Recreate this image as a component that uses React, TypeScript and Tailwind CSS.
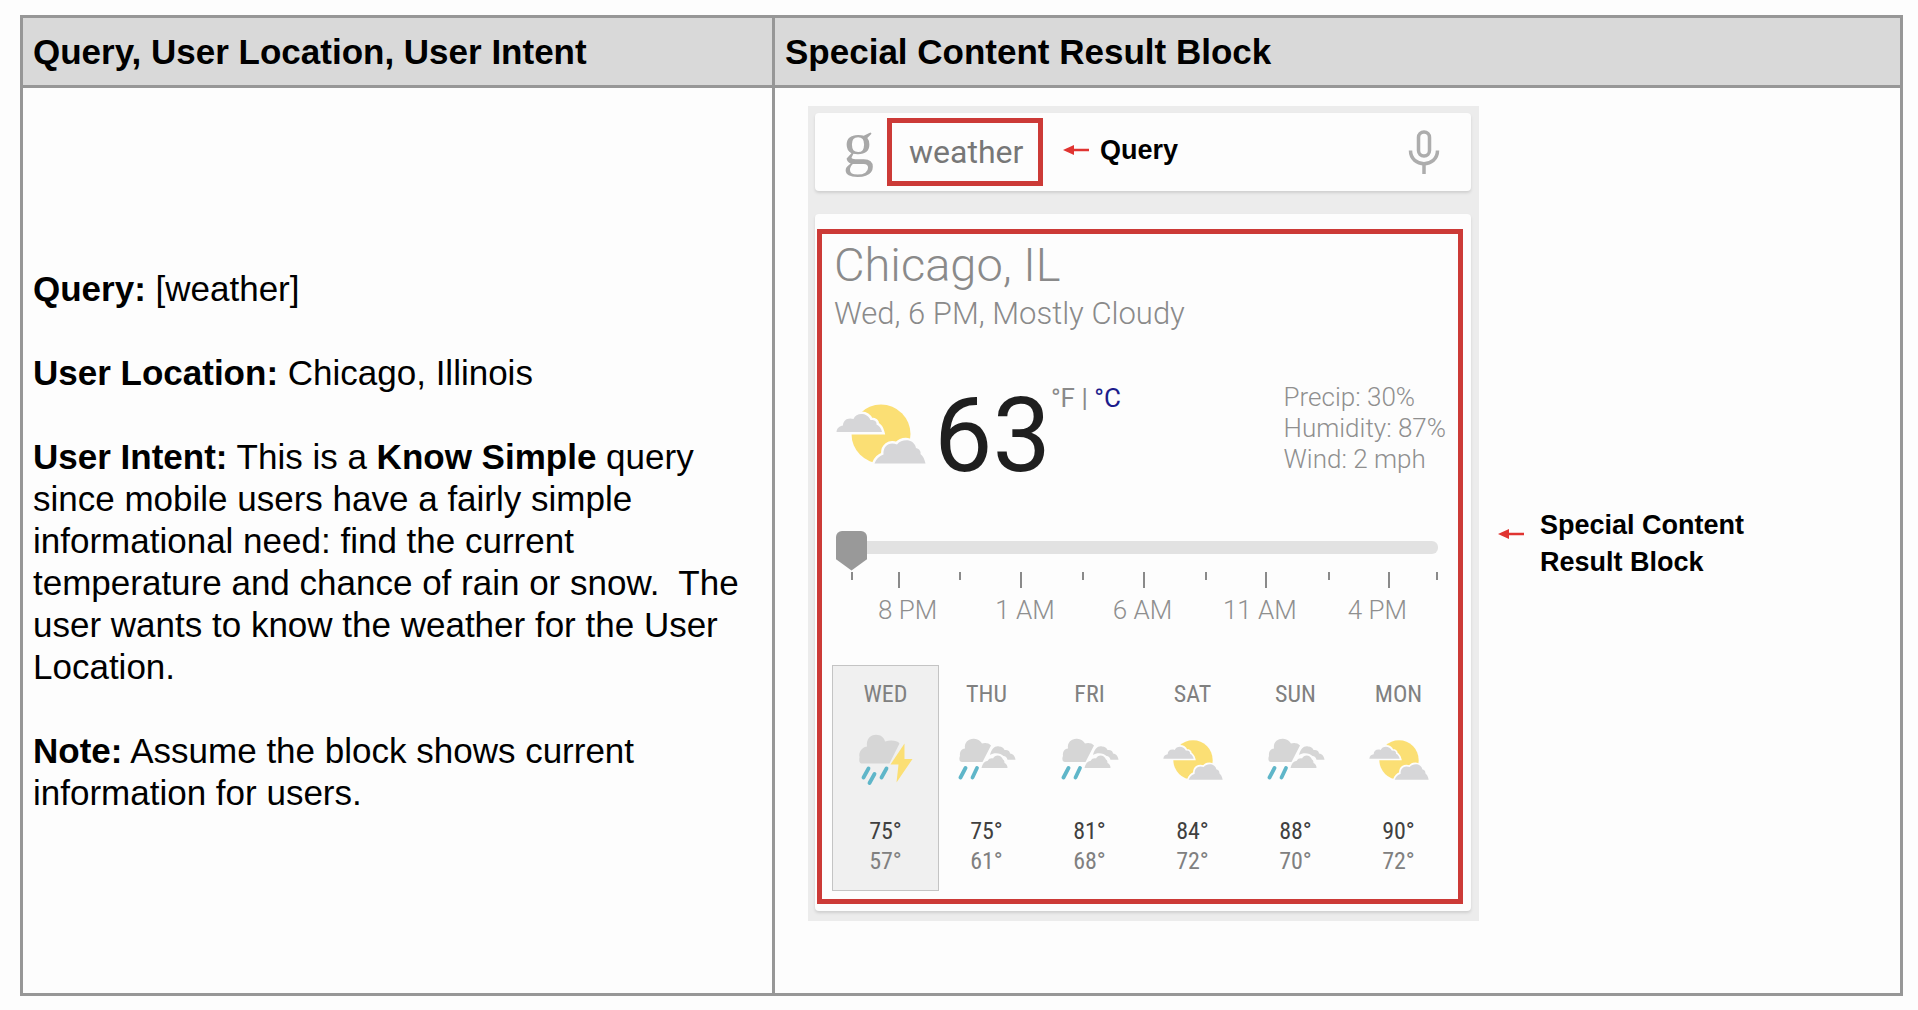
import React, { useState } from "react";

type Sky = "storm" | "rain" | "partly";

const days: { name: string; sky: Sky; high: number; low: number }[] = [
  { name: "WED", sky: "storm", high: 75, low: 57 },
  { name: "THU", sky: "rain", high: 75, low: 61 },
  { name: "FRI", sky: "rain", high: 81, low: 68 },
  { name: "SAT", sky: "partly", high: 84, low: 72 },
  { name: "SUN", sky: "rain", high: 88, low: 70 },
  { name: "MON", sky: "partly", high: 90, low: 72 },
];

const hours = ["8 PM", "1 AM", "6 AM", "11 AM", "4 PM"];
const longTicks = [63, 185, 308, 430, 553];
const shortTicks = [16, 124, 247, 370, 493, 601];

function PartlyCloudy({ className }: { className: string }) {
  return (
    <svg viewBox="0 0 90 60" className={className} aria-hidden="true">
      <circle cx="45" cy="30" r="29.5" fill="#fbdf74" />
      <g stroke="#fdfdfd" strokeWidth="5" paintOrder="stroke" fill="#d6d6d8">
        <path d="M.5 28C1 24 3.5 22 7 21.5C7 16 12 13 17.5 15C20 8.500 31 8 34.500 16C39 15.500 41 18 40.500 20.500C43.500 22 45 24 46 28Z" />
        <path d="M38.500 59.500C40 55 43 52 47.500 50.500C47 42 53 37.500 61 40.500C66 34.500 78 34.500 80 44C84 45 85 48 84.500 50C87 52 88.500 55 89.500 59.500Z" />
      </g>
    </svg>
  );
}

function Rain() {
  return (
    <svg viewBox="0 0 58 44" className="h-11 w-[58px]" aria-hidden="true">
      <g fill="#d6d6d6">
        <path d="M4 24C1 24 1 20 2 18C1.500 14 3 11 7 10.500C6 4 11 .5 16 .8C20 .8 22.500 3 24 5.500C26 4.500 31 4.500 33 7.500L24.500 24Z" />
        <path d="M32 17C33.500 11 37 7.500 41 8.500C44 8.500 45.500 10 46.500 12C50 11.500 52 13.500 52 15.500C55.500 16 57 18.500 57.500 21.700H49.500C49 19.500 47.500 18 45.500 18C43 15 36 14 32 17Z" />
        <path d="M23.500 30C24.500 26 26 23.500 29.500 23C31 20.500 33 20 35 20.500C37 16.500 43 16.500 45 21.500C46.500 22.500 46.500 24 46.500 25C48.500 26 49.500 27.500 49.500 30Z" />
      </g>
      <g stroke="#5fb6c9" strokeWidth="3.8" strokeLinecap="round">
        <path d="M7.500 30L2.500 39.500" />
        <path d="M19 30L14.500 39.500" />
      </g>
    </svg>
  );
}

function Storm() {
  return (
    <svg viewBox="0 0 58 52" className="h-[52px] w-[58px]" aria-hidden="true">
      <path
        d="M5 29.500C2 29.500 2 26 2.500 23C1.500 19 4 13.500 10 12.500C9 5 13.500 .7 19 .7C24 .7 27 3.500 28 7.500C33 6 40 6 42.500 9.500L32.500 29.500Z"
        fill="#d6d6d6"
      />
      <path
        d="M47.500 9.500L33.500 30.500H41.500L39.500 48.500L55.500 25H47.500Z"
        fill="#fbdf74"
        stroke="#f0f0f0"
        strokeWidth="1.500"
        paintOrder="stroke"
      />
      <g stroke="#5fb6c9" strokeWidth="3.8" strokeLinecap="round">
        <path d="M11.500 34.500L6.500 43.500" />
        <path d="M17.500 40L12.500 49" />
        <path d="M29.500 34.500L24.500 43.500" />
      </g>
    </svg>
  );
}

function SkyIcon({ sky }: { sky: Sky }) {
  if (sky === "storm") return <Storm />;
  if (sky === "rain") return <Rain />;
  return <PartlyCloudy className="h-10 w-[60px]" />;
}

function Mic() {
  return (
    <svg viewBox="0 0 32 44" className="h-11 w-8" fill="none" stroke="#adadad" strokeWidth="3.500" aria-hidden="true">
      <rect x="10.500" y="2" width="11" height="24" rx="5.500" />
      <path d="M2.500 20.500C2.500 38 29.500 38 29.500 20.500" />
      <path d="M16 33V44" />
    </svg>
  );
}

function Arrow() {
  return (
    <svg viewBox="0 0 26 12" className="h-3 w-[26px] shrink-0" aria-hidden="true">
      <path d="M0 6L11 1V11Z" fill="#e03431" />
      <path d="M10 6H26" stroke="#e03431" strokeWidth="2.500" />
    </svg>
  );
}

function WeatherBlock() {
  const [hour, setHour] = useState(0);
  const [selected, setSelected] = useState("WED");

  return (
    <div className="ml-0.5 mr-2 border-[5px] border-[#cc3a37] pb-2 pt-[3px]">
      <div className="px-3 font-light text-[#8a8a8a]">
        <h2 className="text-[47px] leading-[56px]">Chicago, IL</h2>
        <p className="text-[31px] leading-[42px]">Wed, 6 PM, Mostly Cloudy</p>
      </div>

      {/* Current conditions */}
      <div className="mt-[47px] flex items-start pl-[14px] pr-3">
        <PartlyCloudy className="mt-[22px] h-[60px] w-[90px]" />
        <span className="ml-2 text-[104px] leading-[108px] text-[#1f1f1f]">63</span>
        <p className="text-[26px] leading-[33px] text-[#8a8a8a]">
          °F | <a href="#celsius" className="text-[#1c1c8c]">°C</a>
        </p>
        <ul className="ml-auto text-[26px] font-light leading-[31px] text-[#8f8f8f]">
          <li>Precip: 30%</li>
          <li>Humidity: 87%</li>
          <li>Wind: 2 mph</li>
        </ul>
      </div>

      {/* Hour slider */}
      <div className="mt-[41px] pl-[14px] pr-5">
        <input
          type="range"
          min={0}
          max={24}
          value={hour}
          onChange={(e) => setHour(Number(e.target.value))}
          aria-label="Forecast hour"
          className="block h-8 w-full appearance-none bg-transparent [&::-webkit-slider-runnable-track]:h-[13px] [&::-webkit-slider-runnable-track]:rounded-md [&::-webkit-slider-runnable-track]:bg-[#e2e2e2] [&::-webkit-slider-thumb]:-mt-[10px] [&::-webkit-slider-thumb]:h-10 [&::-webkit-slider-thumb]:w-[31px] [&::-webkit-slider-thumb]:appearance-none [&::-webkit-slider-thumb]:rounded-t-md [&::-webkit-slider-thumb]:bg-[#999] [&::-webkit-slider-thumb]:[clip-path:polygon(0_0,100%_0,100%_72%,50%_100%,0_72%)]"
        />
        <svg viewBox="0 0 602 16" className="mt-[9px] block w-full" stroke="#8a8a8a" strokeWidth="2" aria-hidden="true">
          {longTicks.map((x) => (
            <path key={x} d={`M${x} 0V16`} />
          ))}
          {shortTicks.map((x) => (
            <path key={x} d={`M${x} 0V8`} />
          ))}
        </svg>
      </div>
      <div className="ml-[27px] mr-[22px] mt-[7px] grid grid-cols-5 text-center text-[26px] font-light leading-[31px] text-[#8f8f8f]">
        {hours.map((label) => (
          <span key={label}>{label}</span>
        ))}
      </div>

      {/* Daily forecast */}
      <div className="ml-[10px] mr-2 mt-[39px] grid grid-cols-6 font-['Roboto_Condensed',Roboto,sans-serif]">
        {days.map((day) => (
          <button
            key={day.name}
            type="button"
            onClick={() => setSelected(day.name)}
            className={`flex flex-col items-center border pb-[14px] pt-[13px] text-[24px] leading-[30px] ${
              selected === day.name ? "-mr-1 border-[#c4c4c4] bg-[#f0f0f0]" : "border-transparent"
            }`}
          >
            <span className="text-[#808080]">{day.name}</span>
            <span className="flex h-[107px] items-center pb-[6px]">
              <SkyIcon sky={day.sky} />
            </span>
            <span className="text-[#404040]">{day.high}°</span>
            <span className="text-[#808080]">{day.low}°</span>
          </button>
        ))}
      </div>
    </div>
  );
}

export default function App() {
  return (
    <div className="min-h-screen bg-[#fdfdfd] pb-3 pl-5 pr-[15px] pt-[15px] font-['Liberation_Sans',Arial,sans-serif] text-[35px] leading-[42px] text-black">
      <table className="w-full table-fixed border-collapse">
        <colgroup>
          <col className="w-2/5" />
          <col />
        </colgroup>
        <thead>
          <tr className="bg-[#d9d9d9] text-left">
            <th className="border-[3px] border-[#979797] px-[10px] pb-3 pt-[13px] font-bold">
              Query, User Location, User Intent
            </th>
            <th className="border-[3px] border-[#979797] px-[10px] pb-3 pt-[13px] font-bold">
              Special Content Result Block
            </th>
          </tr>
        </thead>
        <tbody>
          <tr>
            <td className="border-[3px] border-[#979797] px-[10px] align-middle">
              <div className="space-y-[42px]">
                <p>
                  <b>Query:</b> [weather]
                </p>
                <p>
                  <b>User Location:</b> Chicago, Illinois
                </p>
                <p>
                  <b>User Intent:</b> This is a <b>Know Simple</b> query since mobile users have a
                  fairly simple informational need: find the current temperature and chance of rain
                  or snow.&nbsp; The user wants to know the weather for the User Location.
                </p>
                <p>
                  <b>Note:</b> Assume the block shows current information for users.
                </p>
              </div>
            </td>
            <td className="border-[3px] border-[#979797] pb-[72px] pl-[33px] pt-[18px]">
              <div className="flex items-center">
                <div className="w-[671px] shrink-0 bg-[#ececec] pb-[10px] pl-[7px] pr-2 pt-[7px] font-[Roboto,sans-serif]">
                  {/* Search bar */}
                  <div className="flex h-[78px] items-center rounded-sm bg-[#fdfdfd] pl-7 pr-[31px] shadow-[0_2px_3px_#cfcfcf]">
                    <span className="w-11 pb-[18px] font-['Liberation_Serif',serif] text-[62px] leading-none text-[#a8a8a8]">
                      g
                    </span>
                    <input
                      type="text"
                      defaultValue="weather"
                      aria-label="Search"
                      className="h-[68px] w-[156px] border-[5px] border-[#cc3a37] pl-[17px] text-[32px] text-[#777]"
                    />
                    <div className="ml-5 flex items-center gap-[11px] pb-1">
                      <Arrow />
                      <span className="font-['Liberation_Sans',Arial,sans-serif] text-[27px] font-bold leading-[37px]">
                        Query
                      </span>
                    </div>
                    <button type="button" aria-label="Voice search" className="ml-auto">
                      <Mic />
                    </button>
                  </div>

                  <div className="mt-[23px] rounded-sm bg-[#fdfdfd] pb-[7px] pt-[15px] shadow-[0_2px_3px_#cfcfcf]">
                    <WeatherBlock />
                  </div>
                </div>

                <div className="ml-[19px] flex items-center gap-4 pt-[60px] text-[27px] font-bold leading-[37px]">
                  <span className="pb-5">
                    <Arrow />
                  </span>
                  <p>
                    Special Content
                    <br />
                    Result Block
                  </p>
                </div>
              </div>
            </td>
          </tr>
        </tbody>
      </table>
    </div>
  );
}
